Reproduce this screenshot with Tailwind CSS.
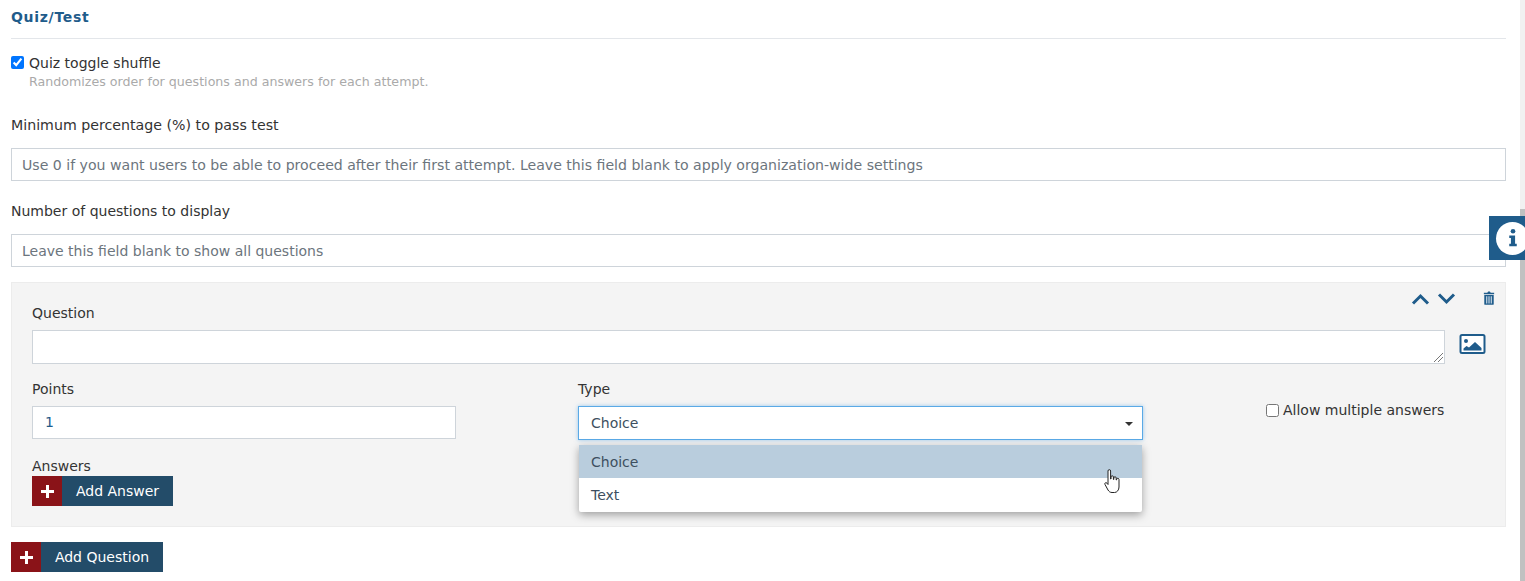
<!DOCTYPE html>
<html><head><meta charset="utf-8"><script src="https://cdn.jsdelivr.net/npm/@tailwindcss/browser@4"></script></head>
<body class="bg-white overflow-hidden">
<div class="relative w-[1525px] h-[581px] overflow-hidden font-['DejaVu_Sans',sans-serif] text-[14px] text-[#333]">
  <main class="w-[1495px] ml-[11px] flex flex-col">
    <div class="h-[39px] border-b border-[#e3e6ea] pt-[8px]"><h2 class="text-[14px] tracking-[0.7px] leading-[18px] font-bold text-[#1f5c8b]">Quiz/Test</h2></div>
    <div class="mt-[14px] flex items-start">
      <input type="checkbox" checked class="w-[13px] h-[13px] mt-[3px] accent-[#0075ff]">
      <div class="ml-[5px]"><div class="leading-[20px] text-[14px]">Quiz toggle shuffle</div><div class="text-[12.63px] leading-[17px] text-[#aaa]">Randomizes order for questions and answers for each attempt.</div></div>
    </div>
    <label class="mt-[25px] leading-[20px] text-[14.2px]">Minimum percentage (%) to pass test</label>
    <div class="mt-[13px] h-[33px] border border-[#ced4da] pl-[10px] pt-[2px] flex items-center text-[#6c757d] text-[14.1px]">Use 0 if you want users to be able to proceed after their first attempt. Leave this field blank to apply organization-wide settings</div>
    <label class="mt-[20px] leading-[20px]">Number of questions to display</label>
    <div class="mt-[13px] h-[33px] border border-[#ced4da] pl-[10px] pt-[2px] flex items-center text-[#6c757d]">Leave this field blank to show all questions</div>
    <section class="relative mt-[15px] h-[245px] bg-[#f4f4f4] border border-[#ececec] pl-[20px] pt-[20px]">
      <div class="absolute right-[49px] top-[9px] flex gap-[7px] text-[#1f5c8b]">
        <svg class="w-[19px] h-[14px]" viewBox="0 0 19 14" fill="none" stroke="currentColor" stroke-width="3"><path d="M2 11.5l7.5-7.5 7.5 7.5"/></svg>
        <svg class="w-[19px] h-[14px]" viewBox="0 0 19 14" fill="none" stroke="currentColor" stroke-width="3"><path d="M2 2.5l7.5 7.5 7.5-7.5"/></svg>
      </div>
      <svg class="absolute right-[10px] top-[8px] w-[12px] h-[14px]" viewBox="0 0 14 16"><path fill="#1f5c8b" d="M1 2h4l1-1.500h2l1 1.500h4v1.500h-12zM1.500 4.500h11v10.500a1 1 0 0 1-1 1h-9a1 1 0 0 1-1-1z"/><path stroke="#b9cddd" stroke-width="1.500" d="M4.300 6v8.500M7 6v8.500M9.700 6v8.500"/></svg>
      <label class="block leading-[20px]">Question</label>
      <div class="mt-[7px] flex items-start">
        <div class="relative w-[1413px] h-[34px] bg-white border border-[#ced4da]">
          <svg class="absolute right-[1px] bottom-[1px] w-[9px] h-[9px]" viewBox="0 0 9 9" stroke="#777" fill="none"><path d="M0 9L9 0M4 9L9 4"/></svg>
        </div>
        <svg class="ml-[14px] mt-[4px] w-[27px] h-[20px]" viewBox="0 0 26 20"><rect x="1" y="1" width="24" height="18" rx="1.500" fill="#fff" stroke="#1f5c8b" stroke-width="2"/><circle cx="6.500" cy="7" r="2" fill="#1f5c8b"/><path fill="#1f5c8b" d="M4 16.500v-2l3-2.500 2.500 1.500 6-5.500 6.500 6v2.500z"/></svg>
      </div>
      <div class="mt-[15px] flex items-start">
        <div class="w-[424px]"><label class="block leading-[20px]">Points</label>
          <div class="mt-[7px] h-[33px] bg-white border border-[#ced4da] pl-[12px] flex items-center text-[#1f5c8b] text-[14px]">1</div></div>
        <div class="ml-[122px] w-[565px]"><label class="block leading-[20px]">Type</label>
          <div class="relative mt-[7px] h-[34px] bg-white border border-[#5aa9e6] shadow-[0_0_4px_rgba(90,169,230,0.6)] pl-[12px] flex items-center text-[#3d4f60]">Choice
            <span class="absolute right-[9px] top-[15px] w-0 h-0 border-x-[4px] border-x-transparent border-t-[4px] border-t-[#333]"></span></div></div>
        <label class="ml-[123px] mt-[21px] flex items-center gap-[5px] leading-[20px]"><input type="checkbox" class="w-[13px] h-[13px]"><span class="-ml-[1px]">Allow multiple answers</span></label>
      </div>
      <div class="mt-[16px] leading-[20px]">Answers</div>
      <button class="flex h-[30px] text-white"><span class="w-[30px] bg-[#8a1318] flex items-center justify-center"><svg class="w-[13px] h-[13px]" viewBox="0 0 13 13"><path stroke="#fff" stroke-width="3" d="M6.500 0v13M0 6.500h13"/></svg></span><span class="w-[111px] bg-[#234c69] flex items-center justify-center">Add Answer</span></button>
    </section>
    <button class="mt-[15px] flex h-[30px] text-white self-start"><span class="w-[30px] bg-[#8a1318] flex items-center justify-center"><svg class="w-[13px] h-[13px]" viewBox="0 0 13 13"><path stroke="#fff" stroke-width="3" d="M6.500 0v13M0 6.500h13"/></svg></span><span class="w-[122px] bg-[#234c69] flex items-center justify-center">Add Question</span></button>
  </main>

  <div class="absolute left-[579px] top-[445px] w-[563px] h-[67px] bg-white rounded-b-[2px] shadow-[0_3px_8px_rgba(0,0,0,0.35)] text-[#3d4f60]">
    <div class="h-[33px] bg-[#b9cddd] pl-[12px] pt-[2px] flex items-center">Choice</div>
    <div class="h-[34px] pl-[12px] flex items-center">Text</div>
  </div>
  <svg class="absolute left-[1103px] top-[469px] w-[19px] h-[25px]" viewBox="0 0 17 25"><path fill="#fff" stroke="#222" stroke-width="1" stroke-linejoin="round" d="M4 2a1.300 1.300 0 0 1 2.600 0v8h.4V8a1.200 1.200 0 0 1 2.400 0v2.500h.4V9a1.200 1.200 0 0 1 2.400 0v2h.4v-.5a1.200 1.200 0 0 1 2.400 0V18c0 3-2 5.500-4.500 5.500H8c-2 0-3-1-4-2.500L1 15.500c-.8-1.500 1-2.500 2-1.300l1 1.300z"/></svg>

  <div class="absolute right-0 top-0 w-[5px] h-full bg-[#f1f1f1]"><div class="mt-[209px] w-full h-[372px] bg-[#c1c1c1]"></div></div>
  <div class="absolute left-[1489px] top-[216px] w-[36px] h-[44px] bg-[#1f5c8b] overflow-hidden">
    <div class="absolute left-[7px] top-[6px] w-[33px] h-[33px] rounded-full bg-white"></div>
    <svg class="absolute left-[19px] top-[12px] w-[10px] h-[19px]" viewBox="0 0 12 21"><circle cx="6" cy="3" r="2.800" fill="#1f5c8b"/><path fill="#1f5c8b" d="M1.500 8h7v10h2v3h-9v-3h2v-7h-2z"/></svg>
  </div>
</div>
</body></html>
